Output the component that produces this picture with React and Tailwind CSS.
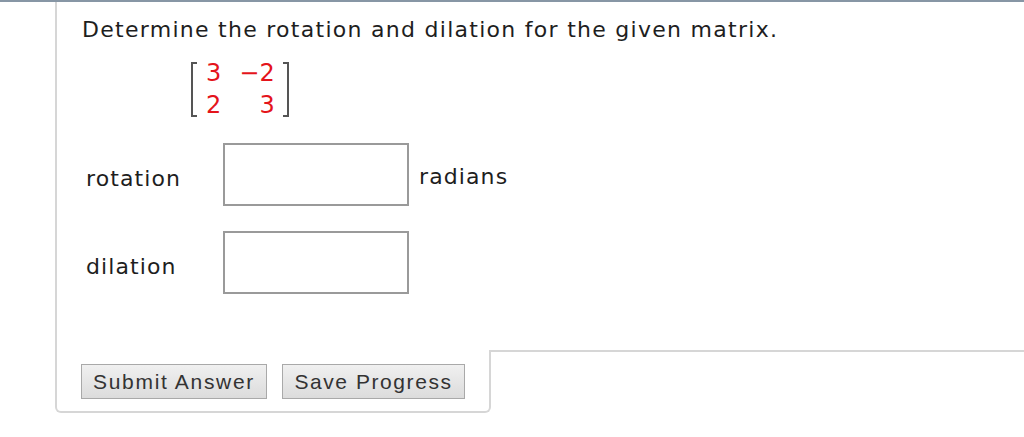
import React from "react";

function Bracket({ side }) {
  return (
    <div
      className={
        side === "left"
          ? "w-[6px] h-[55px] border-l-2 border-t-2 border-b-2 border-[#555]"
          : "w-[6px] h-[55px] border-r-2 border-t-2 border-b-2 border-[#555]"
      }
    />
  );
}

export default function App() {
  const verdana = { fontFamily: '"DejaVu Sans", Verdana, sans-serif' };
  const arial = { fontFamily: '"Liberation Sans", Arial, sans-serif' };
  return (
    <div className="w-[1024px] h-[437px] bg-white overflow-hidden text-[#1e1e1e]" style={verdana}>
      <div className="h-[2px] bg-[#8796a5]" />
      <div className="ml-[55px] flex flex-col">
        <div className="border-l-2 border-[#d6d6d6] pl-[25px] pt-[13px] h-[348px]">
          <div className="text-[22px] leading-[30px] tracking-[0.058em] whitespace-nowrap">
            Determine the rotation and dilation for the given matrix.
          </div>
          <div className="mt-[12px] ml-[109px] flex items-center h-[64px]">
            <Bracket side="left" />
            <div className="grid grid-cols-[auto_auto] gap-x-[18px] pl-[9px] pr-[8px] text-[#e4141b] text-[24px] leading-[32px] text-right">
              <span>3</span>
              <span>−2</span>
              <span>2</span>
              <span>3</span>
            </div>
            <Bracket side="right" />
          </div>
          <div className="mt-[22px] flex items-center h-[63px]">
            <div className="w-[141px] pl-[4px] pt-[8px] text-[22px] tracking-[0.05em]">rotation</div>
            <div className="w-[186px] h-[63px] border-2 border-[#9a9a9a] bg-white" />
            <div className="ml-[10px] pt-[4px] text-[22px] tracking-[0.05em]">radians</div>
          </div>
          <div className="mt-[25px] flex items-center h-[63px]">
            <div className="w-[141px] pl-[4px] pt-[8px] text-[22px] tracking-[0.05em]">dilation</div>
            <div className="w-[186px] h-[63px] border-2 border-[#9a9a9a] bg-white" />
          </div>
        </div>
        <div className="flex">
          <div className="w-[436px] h-[63px] border-l-2 border-r-2 border-b-2 border-[#d6d6d6] rounded-b-[6px] pl-[24px] pt-[14px] flex gap-[15px] items-start">
            <button
              className="h-[35px] w-[186px] border border-[#a9a9a9] bg-gradient-to-b from-[#f0f0f0] to-[#dcdcdc] text-[#333] text-[21px] tracking-[0.08em] leading-none"
              style={arial}
            >
              Submit Answer
            </button>
            <button
              className="h-[35px] w-[183px] border border-[#a9a9a9] bg-gradient-to-b from-[#f0f0f0] to-[#dcdcdc] text-[#333] text-[21px] tracking-[0.075em] leading-none"
              style={arial}
            >
              Save Progress
            </button>
          </div>
          <div className="flex-1 border-t-2 border-[#d6d6d6]" />
        </div>
      </div>
    </div>
  );
}
